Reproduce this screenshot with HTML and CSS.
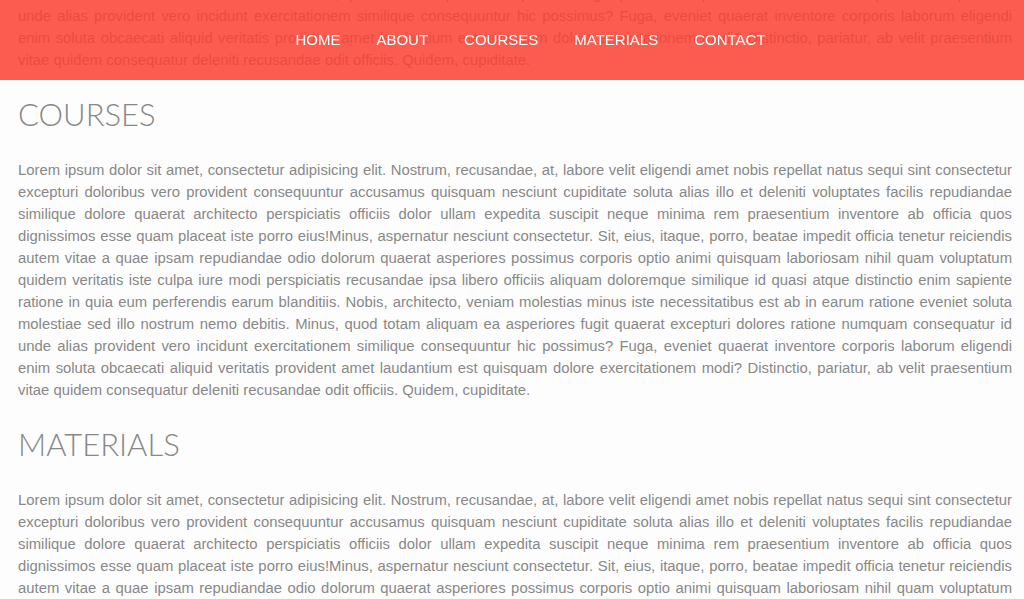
FILE: index.html
```html
<!DOCTYPE html>
<html lang="en">
<head>
<meta charset="utf-8">
<title>Courses</title>
<link rel="stylesheet" href="styles.css">
</head>
<body>
<header class="site-header">
  <nav class="nav">
    <a class="nav-link" href="#home">HOME</a>
    <a class="nav-link" href="#about">ABOUT</a>
    <a class="nav-link" href="#courses">COURSES</a>
    <a class="nav-link" href="#materials">MATERIALS</a>
    <a class="nav-link" href="#contact">CONTACT</a>
  </nav>
</header>
<main class="content">
  <section class="section" id="about">
    <h2 class="section-title">ABOUT</h2>
    <p class="section-text">Lorem ipsum dolor sit amet, consectetur adipisicing elit. Nostrum, recusandae, at, labore velit eligendi amet nobis repellat natus sequi sint consectetur excepturi doloribus vero provident consequuntur accusamus quisquam nesciunt cupiditate soluta alias illo et deleniti voluptates facilis repudiandae similique dolore quaerat architecto perspiciatis officiis dolor ullam expedita suscipit neque minima rem praesentium inventore ab officia quos dignissimos esse quam placeat iste porro eius!Minus, aspernatur nesciunt consectetur. Sit, eius, itaque, porro, beatae impedit officia tenetur reiciendis autem vitae a quae ipsam repudiandae odio dolorum quaerat asperiores possimus corporis optio animi quisquam laboriosam nihil quam voluptatum quidem veritatis iste culpa iure modi perspiciatis recusandae ipsa libero officiis aliquam doloremque similique id quasi atque distinctio enim sapiente ratione in quia eum perferendis earum blanditiis. Nobis, architecto, veniam molestias minus iste necessitatibus est ab in earum ratione eveniet soluta molestiae sed illo nostrum nemo debitis. Minus, quod totam aliquam ea asperiores fugit quaerat excepturi dolores ratione numquam consequatur id unde alias provident vero incidunt exercitationem similique consequuntur hic possimus? Fuga, eveniet quaerat inventore corporis laborum eligendi enim soluta obcaecati aliquid veritatis provident amet laudantium est quisquam dolore exercitationem modi? Distinctio, pariatur, ab velit praesentium vitae quidem consequatur deleniti recusandae odit officiis. Quidem, cupiditate.</p>
  </section>
  <section class="section" id="courses">
    <h2 class="section-title">COURSES</h2>
    <p class="section-text">Lorem ipsum dolor sit amet, consectetur adipisicing elit. Nostrum, recusandae, at, labore velit eligendi amet nobis repellat natus sequi sint consectetur excepturi doloribus vero provident consequuntur accusamus quisquam nesciunt cupiditate soluta alias illo et deleniti voluptates facilis repudiandae similique dolore quaerat architecto perspiciatis officiis dolor ullam expedita suscipit neque minima rem praesentium inventore ab officia quos dignissimos esse quam placeat iste porro eius!Minus, aspernatur nesciunt consectetur. Sit, eius, itaque, porro, beatae impedit officia tenetur reiciendis autem vitae a quae ipsam repudiandae odio dolorum quaerat asperiores possimus corporis optio animi quisquam laboriosam nihil quam voluptatum quidem veritatis iste culpa iure modi perspiciatis recusandae ipsa libero officiis aliquam doloremque similique id quasi atque distinctio enim sapiente ratione in quia eum perferendis earum blanditiis. Nobis, architecto, veniam molestias minus iste necessitatibus est ab in earum ratione eveniet soluta molestiae sed illo nostrum nemo debitis. Minus, quod totam aliquam ea asperiores fugit quaerat excepturi dolores ratione numquam consequatur id unde alias provident vero incidunt exercitationem similique consequuntur hic possimus? Fuga, eveniet quaerat inventore corporis laborum eligendi enim soluta obcaecati aliquid veritatis provident amet laudantium est quisquam dolore exercitationem modi? Distinctio, pariatur, ab velit praesentium vitae quidem consequatur deleniti recusandae odit officiis. Quidem, cupiditate.</p>
  </section>
  <section class="section" id="materials">
    <h2 class="section-title">MATERIALS</h2>
    <p class="section-text">Lorem ipsum dolor sit amet, consectetur adipisicing elit. Nostrum, recusandae, at, labore velit eligendi amet nobis repellat natus sequi sint consectetur excepturi doloribus vero provident consequuntur accusamus quisquam nesciunt cupiditate soluta alias illo et deleniti voluptates facilis repudiandae similique dolore quaerat architecto perspiciatis officiis dolor ullam expedita suscipit neque minima rem praesentium inventore ab officia quos dignissimos esse quam placeat iste porro eius!Minus, aspernatur nesciunt consectetur. Sit, eius, itaque, porro, beatae impedit officia tenetur reiciendis autem vitae a quae ipsam repudiandae odio dolorum quaerat asperiores possimus corporis optio animi quisquam laboriosam nihil quam voluptatum quidem veritatis iste culpa iure modi perspiciatis recusandae ipsa libero officiis aliquam doloremque similique id quasi atque distinctio enim sapiente ratione in quia eum perferendis earum blanditiis. Nobis, architecto, veniam molestias minus iste necessitatibus est ab in earum ratione eveniet soluta molestiae sed illo nostrum nemo debitis. Minus, quod totam aliquam ea asperiores fugit quaerat excepturi dolores ratione numquam consequatur id unde alias provident vero incidunt exercitationem similique consequuntur hic possimus? Fuga, eveniet quaerat inventore corporis laborum eligendi enim soluta obcaecati aliquid veritatis provident amet laudantium est quisquam dolore exercitationem modi? Distinctio, pariatur, ab velit praesentium vitae quidem consequatur deleniti recusandae odit officiis. Quidem, cupiditate.</p>
  </section>
</main>
</body>
</html>
```

FILE: styles.css
```css
html, body {
  margin: 0;
  padding: 0;
}

body {
  background: #fdfdfd;
  color: #888888;
  font-family: "Liberation Sans", Arial, sans-serif;
  font-size: 14.85px;
  overflow: hidden;
}

.site-header {
  position: fixed;
  top: 0;
  left: 0;
  right: 0;
  height: 80px;
  background: rgba(250, 65, 50, 0.86);
  z-index: 10;
}

.nav {
  height: 80px;
  display: flex;
  align-items: center;
  justify-content: center;
  gap: 36px;
  padding-left: 37px;
}

.nav-link {
  color: #ffffff;
  text-decoration: none;
  font-family: "Liberation Sans", Arial, sans-serif;
  font-size: 15px;
  line-height: 18px;
}

.content {
  margin-top: -234px;
  padding: 0 12px 0 18px;
}

.section-title {
  margin: 0 0 27px;
  font-family: Lato, "Open Sans", sans-serif;
  font-weight: 300;
  font-size: 31px;
  line-height: 36px;
  color: #888888;
}

.section-text {
  margin: 0 0 25px;
  line-height: 22px;
  text-align: justify;
}
```
